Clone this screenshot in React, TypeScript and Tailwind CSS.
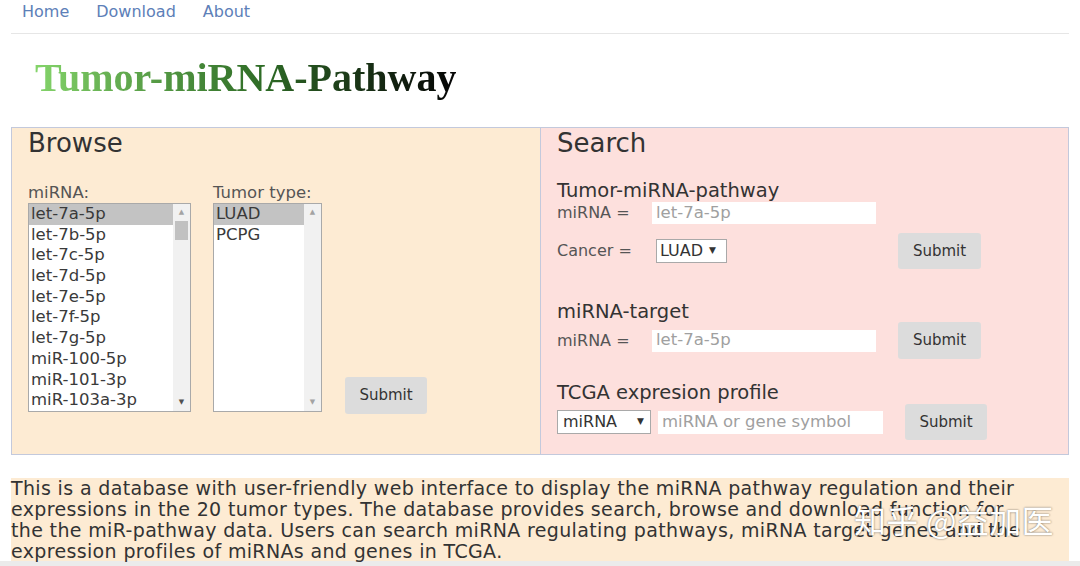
import React from "react";

const mirnas = [
  "let-7a-5p",
  "let-7b-5p",
  "let-7c-5p",
  "let-7d-5p",
  "let-7e-5p",
  "let-7f-5p",
  "let-7g-5p",
  "miR-100-5p",
  "miR-101-3p",
  "miR-103a-3p",
];

const ListBox = ({
  items,
  width,
  thumb,
}: {
  items: string[];
  width: string;
  thumb: boolean;
}) => {
  return (
    <div className={`flex h-[209px] border border-[#a9a9a9] bg-white ${width}`}>
      <div className="flex-1 flex flex-col">
        {items.map((it, i) => (
          <div
            key={it}
            className={`h-[20.7px] leading-[20.7px] pl-[2px] text-[16.5px] text-[#3a3a3a] ${
              i === 0 ? "bg-[#c3c3c3]" : ""
            }`}
          >
            {it}
          </div>
        ))}
      </div>
      <div className="w-[17px] bg-[#f1f1f1] flex flex-col items-center">
        <div className="h-[17px] flex items-center justify-center text-[7px] text-[#a3a3a3]">
          ▲
        </div>
        {thumb && <div className="w-[13px] h-[19px] bg-[#c1c1c1]" />}
        <div className="flex-1" />
        <div
          className={`h-[17px] flex items-center justify-center text-[7px] ${
            thumb ? "text-[#505050]" : "text-[#a3a3a3]"
          }`}
        >
          ▼
        </div>
      </div>
    </div>
  );
};

const SubmitBtn = ({ cls }: { cls: string }) => (
  <button
    className={`bg-[#dcdcdc] rounded-[3px] text-[15px] text-[#333] flex items-center justify-center ${cls}`}
  >
    Submit
  </button>
);

const TextBox = ({ ph, cls }: { ph: string; cls: string }) => (
  <div
    className={`bg-white h-[22px] pl-[4px] flex items-center text-[16.5px] text-[#a0a0a0] ${cls}`}
  >
    {ph}
  </div>
);

export default function App() {
  return (
    <div className="w-[1080px] h-[566px] overflow-hidden bg-white font-['DejaVu_Sans',Verdana,sans-serif] text-[#333]">
      <div className="mx-[11px]">
        {/* nav */}
        <div className="h-[34px] flex gap-[27px] pl-[11px] text-[16px] text-[#5d80b8] border-b border-[#e6e6e6]">
          <span>Home</span>
          <span>Download</span>
          <span>About</span>
        </div>

        {/* title */}
        <div className="h-[93px] pl-[24px] pt-[20px]">
          <span className="font-['Liberation_Serif',serif] font-bold text-[40px] leading-[48px] bg-linear-to-r from-[#84d46a] via-[#2d6a25] via-55% to-[#050505] bg-clip-text text-transparent">
            Tumor-miRNA-Pathway
          </span>
        </div>

        {/* panels */}
        <div className="flex h-[328px] border border-[#c3c9dc]">
          <div className="w-[529px] bg-[#fdebd3] border-r border-[#c3c9dc] pl-[16px] flex flex-col">
            <div className="h-[30px] text-[26px] leading-[30px] text-[#333]">
              Browse
            </div>
            <div className="flex items-end mt-[24px]">
              <div className="flex flex-col">
                <div className="text-[16.5px] leading-[21px] text-[#555]">miRNA:</div>
                <ListBox items={mirnas} width="w-[163px]" thumb />
              </div>
              <div className="flex flex-col ml-[22px]">
                <div className="text-[16.5px] leading-[21px] text-[#555]">
                  Tumor type:
                </div>
                <ListBox items={["LUAD", "PCPG"]} width="w-[109px]" thumb={false} />
              </div>
              <SubmitBtn cls="w-[82px] h-[37px] ml-[23px] mb-[-2px]" />
            </div>
          </div>

          <div className="flex-1 bg-[#fde0dd] pl-[16px] flex flex-col">
            <div className="h-[30px] text-[26px] leading-[30px] text-[#333]">
              Search
            </div>
            <div className="mt-[22px] h-[21px] text-[19.5px] leading-[21px]">
              Tumor-miRNA-pathway
            </div>
            <div className="h-[22px] flex items-center mt-[1px]">
              <span className="w-[95px] text-[16px] text-[#555]">miRNA =</span>
              <TextBox ph="let-7a-5p" cls="w-[224px]" />
            </div>
            <div className="mt-[9px] h-[36px] flex items-center">
              <span className="w-[99px] text-[16px] text-[#555]">Cancer =</span>
              <div className="w-[71px] h-[24px] bg-white border border-[#a9a9a9] flex items-center pl-[3px] text-[16px] text-[#333]">
                LUAD
                <span className="ml-[6px] text-[9px]">▼</span>
              </div>
              <SubmitBtn cls="w-[83px] h-[36px] ml-[171px]" />
            </div>
            <div className="mt-[32px] h-[21px] text-[19.5px] leading-[21px]">
              miRNA-target
            </div>
            <div className="h-[37px] flex items-center">
              <span className="w-[95px] text-[16px] text-[#555]">miRNA =</span>
              <TextBox ph="let-7a-5p" cls="w-[224px]" />
              <SubmitBtn cls="w-[83px] h-[37px] ml-[22px]" />
            </div>
            <div className="mt-[23px] h-[22px] text-[19.5px] leading-[22px]">
              TCGA expresion profile
            </div>
            <div className="h-[36px] flex items-center">
              <div className="w-[94px] h-[24px] bg-white border border-[#a9a9a9] flex items-center pl-[5px] pr-[6px] text-[16px] text-[#333]">
                <span className="flex-1">miRNA</span>
                <span className="text-[9px]">▼</span>
              </div>
              <TextBox ph="miRNA or gene symbol" cls="w-[225px] h-[23px] ml-[7px]" />
              <SubmitBtn cls="w-[82px] h-[36px] ml-[22px]" />
            </div>
          </div>
        </div>
      </div>

      {/* description */}
      <div className="relative mt-[23px] mx-[11px] h-[83px] bg-[#fdebd3] font-['DejaVu_Sans',sans-serif] text-[19px] tracking-[0.35px] leading-[21px] text-[#333]">
        <p>
          This is a database with user-friendly web interface to display the miRNA pathway regulation and their
          <br />
          expressions in the 20 tumor types. The database provides search, browse and download function for
          <br />
          the the miR-pathway data. Users can search miRNA regulating pathways, miRNA target genes and the
          <br />
          expression profiles of miRNAs and genes in TCGA.
        </p>
        <div className="absolute left-[843px] top-[23px] font-['Noto_Sans_CJK_SC',sans-serif] text-[32px] leading-[36px] text-white [text-shadow:0_0_2px_rgba(0,0,0,0.6)]">
          知乎 @益加医
        </div>
      </div>
      <div className="h-[6px] bg-[#ebebeb]" />
    </div>
  );
}
